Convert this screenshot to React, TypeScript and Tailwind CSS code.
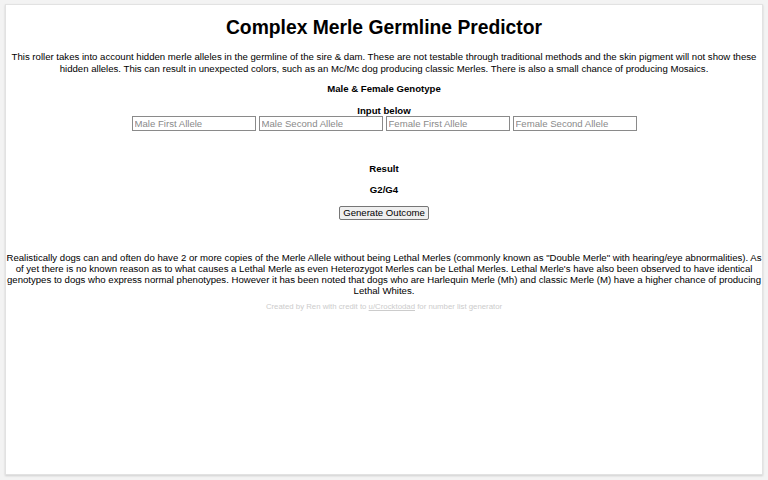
export default function App() {
  return (
    <div className="min-h-screen bg-[#f3f3f3] p-[4px_5px_5px_5px]" style={{ fontFamily: '"Liberation Sans", Arial, sans-serif' }}>
      <div className="h-[471px] bg-white border border-[#e2e2e2] shadow-[0_1px_2px_rgba(0,0,0,0.15)] text-black text-center">
        <h1 className="text-[19.3px] font-bold leading-[24px] pt-[11px]">Complex Merle Germline Predictor</h1>
        <p className="text-[9.6px] leading-[12px] mt-[11px] px-[2px]">
          This roller takes into account hidden merle alleles in the germline of the sire &amp; dam. These are not testable through traditional methods and the skin pigment will not show these hidden alleles. This can result in unexpected colors, such as an Mc/Mc dog producing classic Merles. There is also a small chance of producing Mosaics.
        </p>
        <p className="text-[9.6px] leading-[12px] font-bold mt-[8px]">Male &amp; Female Genotype</p>
        <p className="text-[9.6px] leading-[12px] font-bold mt-[10px]">Input below</p>
        <div className="flex justify-center gap-[3px] -mt-[1px]">
          <Field placeholder="Male First Allele" />
          <Field placeholder="Male Second Allele" />
          <Field placeholder="Female First Allele" />
          <Field placeholder="Female Second Allele" />
        </div>
        <p className="text-[9.6px] leading-[12px] font-bold mt-[32px]">Result</p>
        <p className="text-[9.6px] leading-[12px] font-bold mt-[9px]">G2/G4</p>
        <div className="mt-[3px]">
          <button className="text-[9.6px] leading-[12px] px-[3px] py-0 border border-[#767676] bg-[#efefef] rounded-[2px]">Generate Outcome</button>
        </div>
        <p className="text-[9.6px] leading-[11px] mt-[29px]">
          Realistically dogs can and often do have 2 or more copies of the Merle Allele without being Lethal Merles (commonly known as "Double Merle" with hearing/eye abnormalities). As of yet there is no known reason as to what causes a Lethal Merle as even Heterozygot Merles can be Lethal Merles. Lethal Merle's have also been observed to have identical genotypes to dogs who express normal phenotypes. However it has been noted that dogs who are Harlequin Merle (Mh) and classic Merle (M) have a higher chance of producing Lethal Whites.
        </p>
        <p className="text-[7.8px] leading-[10px] text-[#cccccc] mt-[6px]">
          Created by Ren with credit to <span className="underline">u/Crocktodad</span> for number list generator
        </p>
      </div>
    </div>
  );
}

function Field({ placeholder }: { placeholder: string }) {
  return (
    <input
      placeholder={placeholder}
      className="w-[124px] h-[15px] border border-[#8a8a8a] px-[2px] text-[9.6px] leading-[12px] placeholder:text-[#8a8a8a] outline-none"
    />
  );
}
